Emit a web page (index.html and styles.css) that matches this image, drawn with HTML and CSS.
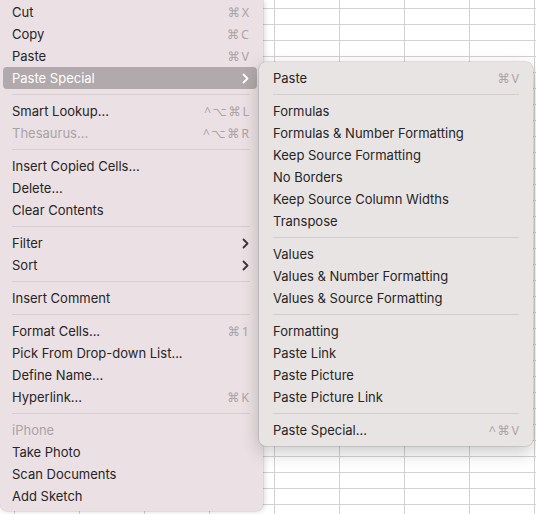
FILE: index.html
```html
<!DOCTYPE html>
<html>
<head>
<meta charset="utf-8">
<link rel="stylesheet" href="styles.css">
</head>
<body>
<div class="menu main">
  <div class="item"><span class="label">Cut</span><span class="key">⌘X</span></div>
  <div class="item"><span class="label">Copy</span><span class="key">⌘C</span></div>
  <div class="item"><span class="label">Paste</span><span class="key">⌘V</span></div>
  <div class="item active"><span class="label">Paste Special</span>
    <svg class="chev" width="7" height="11" viewBox="0 0 7 11"><path d="M1.5 1.5 L5.5 5.5 L1.5 9.5" fill="none" stroke="currentColor" stroke-width="1.8" stroke-linecap="round" stroke-linejoin="round"/></svg>
  </div>
  <div class="sep"></div>
  <div class="item"><span class="label">Smart Lookup...</span><span class="key">^⌥⌘L</span></div>
  <div class="item disabled"><span class="label">Thesaurus...</span><span class="key">^⌥⌘R</span></div>
  <div class="sep"></div>
  <div class="item"><span class="label">Insert Copied Cells...</span></div>
  <div class="item"><span class="label">Delete...</span></div>
  <div class="item"><span class="label">Clear Contents</span></div>
  <div class="sep"></div>
  <div class="item"><span class="label">Filter</span>
    <svg class="chev" width="7" height="11" viewBox="0 0 7 11"><path d="M1.5 1.5 L5.5 5.5 L1.5 9.5" fill="none" stroke="currentColor" stroke-width="1.8" stroke-linecap="round" stroke-linejoin="round"/></svg>
  </div>
  <div class="item"><span class="label">Sort</span>
    <svg class="chev" width="7" height="11" viewBox="0 0 7 11"><path d="M1.5 1.5 L5.5 5.5 L1.5 9.5" fill="none" stroke="currentColor" stroke-width="1.8" stroke-linecap="round" stroke-linejoin="round"/></svg>
  </div>
  <div class="sep"></div>
  <div class="item"><span class="label">Insert Comment</span></div>
  <div class="sep"></div>
  <div class="item"><span class="label">Format Cells...</span><span class="key">⌘1</span></div>
  <div class="item"><span class="label">Pick From Drop-down List...</span></div>
  <div class="item"><span class="label">Define Name...</span></div>
  <div class="item"><span class="label">Hyperlink...</span><span class="key">⌘K</span></div>
  <div class="sep"></div>
  <div class="item disabled"><span class="label">iPhone</span></div>
  <div class="item"><span class="label">Take Photo</span></div>
  <div class="item"><span class="label">Scan Documents</span></div>
  <div class="item"><span class="label">Add Sketch</span></div>
</div>
<div class="menu sub">
  <div class="item"><span class="label">Paste</span><span class="key">⌘V</span></div>
  <div class="sep"></div>
  <div class="item"><span class="label">Formulas</span></div>
  <div class="item"><span class="label">Formulas &amp; Number Formatting</span></div>
  <div class="item"><span class="label">Keep Source Formatting</span></div>
  <div class="item"><span class="label">No Borders</span></div>
  <div class="item"><span class="label">Keep Source Column Widths</span></div>
  <div class="item"><span class="label">Transpose</span></div>
  <div class="sep"></div>
  <div class="item"><span class="label">Values</span></div>
  <div class="item"><span class="label">Values &amp; Number Formatting</span></div>
  <div class="item"><span class="label">Values &amp; Source Formatting</span></div>
  <div class="sep"></div>
  <div class="item"><span class="label">Formatting</span></div>
  <div class="item"><span class="label">Paste Link</span></div>
  <div class="item"><span class="label">Paste Picture</span></div>
  <div class="item"><span class="label">Paste Picture Link</span></div>
  <div class="sep"></div>
  <div class="item"><span class="label">Paste Special...</span><span class="key">^⌘V</span></div>
</div>
</body>
</html>
```

FILE: styles.css
```css
html, body {
  margin: 0;
  padding: 0;
}
body {
  width: 536px;
  height: 514px;
  overflow: hidden;
  position: relative;
  font-family: Inter, "Noto Sans", "Liberation Sans", sans-serif;
  font-size: 13px;
  color: #262425;
  background-color: #ffffff;
  background-image:
    linear-gradient(to right, #d2d2d2 1px, transparent 1px),
    linear-gradient(to bottom, #d2d2d2 1px, transparent 1px);
  background-size: 65px 16px, 65px 16px;
  background-position: 274px 0, 0 8px;
}
.menu {
  box-sizing: border-box;
}
.main {
  width: 263px;
  height: 511px;
  background: #ebe1e4;
  border-bottom-right-radius: 7px;
  border-bottom-left-radius: 7px;
  padding-top: 1px;
  box-shadow: 1px 0 6px rgba(0,0,0,0.18), 0 0 0 0.5px rgba(0,0,0,0.12);
}
.sub {
  position: absolute;
  left: 259px;
  top: 62px;
  width: 274px;
  height: 384px;
  padding-top: 5px;
  background: #e9e4e4;
  border-radius: 7px;
  box-shadow: 0 6px 18px rgba(0,0,0,0.22), 0 0 0 0.5px rgba(0,0,0,0.18);
}
.item {
  display: flex;
  align-items: center;
  height: 22px;
  border-radius: 4px;
}
.main .item {
  margin: 0 6px 0 3px;
  padding: 0 8px 0 9px;
}
.sub .item {
  margin: 0 5px;
  padding: 0 9px 0 9px;
}
.label {
  flex: 1;
  white-space: nowrap;
}
.key {
  color: #aba4a6;
  font-family: "Noto Sans", "DejaVu Sans", sans-serif;
  font-size: 12.5px;
  letter-spacing: 1.5px;
  margin-right: -1.5px;
}
.chev {
  color: #3a3637;
}
.active {
  background: #b1a9ab;
  color: #ffffff;
}
.active .chev {
  color: #ffffff;
}
.disabled {
  color: #aaa2a5;
}
.sep {
  height: 1px;
  background: #d6ced1;
}
.main .sep {
  margin: 5px 13px 5px 12px;
}
.sub .sep {
  background: #d3cfcf;
  margin: 5px 14px 5px 14px;
}
```
